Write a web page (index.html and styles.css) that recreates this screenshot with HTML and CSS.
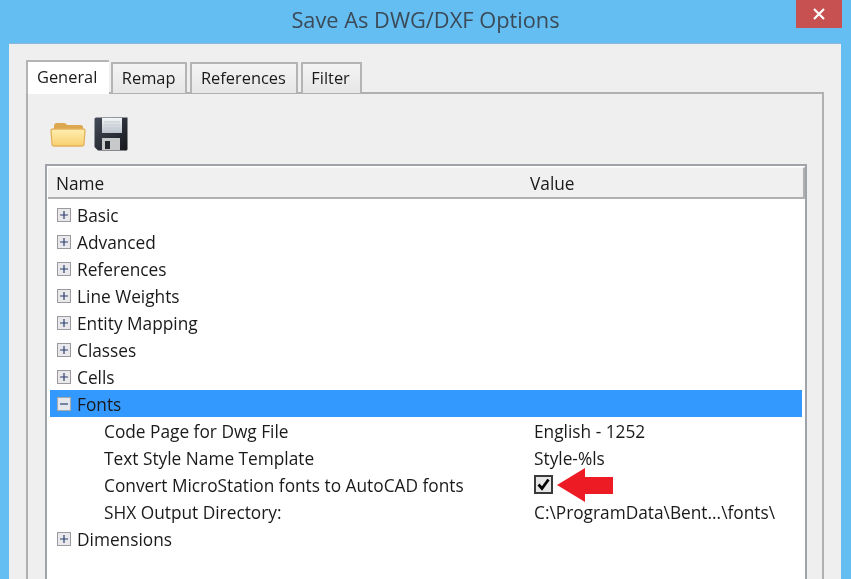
FILE: index.html
```html
<!DOCTYPE html>
<html lang="en">
<head>
<meta charset="utf-8">
<title>Save As DWG/DXF Options</title>
<link rel="stylesheet" href="styles.css">
</head>
<body>
<div class="titlebar">
  <span></span>
  <h1 class="title">Save As DWG/DXF Options</h1>
  <div class="close"><svg width="14" height="14" viewBox="0 0 14 14"><path d="M2 2 L12 12 M12 2 L2 12" stroke="#fff" stroke-width="2.200" fill="none"/></svg></div>
</div>
<main class="client">
  <div class="tabs">
    <div class="tab active">General</div>
    <div class="tab">Remap</div>
    <div class="tab">References</div>
    <div class="tab">Filter</div>
  </div>
  <section class="pane">
    <div class="toolbar">
      <svg class="ico-folder" width="36" height="25" viewBox="0 0 36 25">
        <defs>
          <linearGradient id="fg" x1="0" y1="0" x2="0" y2="1"><stop offset="0" stop-color="#ffeeb0"/><stop offset="1" stop-color="#f9d070"/></linearGradient>
        </defs>
        <path d="M4 4 Q4 1 7 1 H14 Q16 1 17 3 H30 Q33 3 33 5 V9 H4 Z" fill="#dca74e"/>
        <path d="M1 9 Q1 7 3 7 H33 Q35 7 35 9 L34 22 Q34 24 32 24 H4 Q2 24 2 22 Z" fill="url(#fg)" stroke="#e3b25c" stroke-width="1.300"/>
      </svg>
      <svg class="ico-disk" width="34" height="34" viewBox="0 0 34 34">
        <defs>
          <linearGradient id="dg" x1="0" y1="0" x2="1" y2="1"><stop offset="0" stop-color="#454b58"/><stop offset="1" stop-color="#15171c"/></linearGradient>
          <linearGradient id="lb" x1="0" y1="0" x2="0" y2="1"><stop offset="0" stop-color="#f4f6f8"/><stop offset="1" stop-color="#bcc3cb"/></linearGradient>
        </defs>
        <path d="M0.500 2 Q0.500 0.500 2 0.500 H33.500 V32 Q33.500 33.500 32 33.500 H4 L0.500 30 Z" fill="url(#dg)"/>
        <rect x="8" y="1" width="20" height="15" fill="url(#lb)"/>
        <path d="M10 5 H26 M10 8 H26 M10 11 H26" stroke="#c3cad2" stroke-width="1"/>
        <rect x="8" y="21" width="18" height="12" fill="#c6c8ca"/>
        <rect x="11" y="24" width="5" height="8" fill="#23262c"/>
      </svg>
    </div>
    <div class="tree">
      <div class="head">
        <div class="head-name">Name</div>
        <div class="head-value">Value</div>
      </div>
      <div class="row"><svg class="exp" viewBox="0 0 14 14"><use href="#plus"/></svg><span class="label">Basic</span></div>
      <div class="row"><svg class="exp" viewBox="0 0 14 14"><use href="#plus"/></svg><span class="label">Advanced</span></div>
      <div class="row"><svg class="exp" viewBox="0 0 14 14"><use href="#plus"/></svg><span class="label">References</span></div>
      <div class="row"><svg class="exp" viewBox="0 0 14 14"><use href="#plus"/></svg><span class="label">Line Weights</span></div>
      <div class="row"><svg class="exp" viewBox="0 0 14 14"><use href="#plus"/></svg><span class="label">Entity Mapping</span></div>
      <div class="row"><svg class="exp" viewBox="0 0 14 14"><use href="#plus"/></svg><span class="label">Classes</span></div>
      <div class="row"><svg class="exp" viewBox="0 0 14 14"><use href="#plus"/></svg><span class="label">Cells</span></div>
      <div class="row selected"><svg class="exp" viewBox="0 0 14 14"><use href="#minus"/></svg><span class="label">Fonts</span></div>
      <div class="row child"><span class="name">Code Page for Dwg File</span><span class="value">English - 1252</span></div>
      <div class="row child"><span class="name">Text Style Name Template</span><span class="value">Style-%ls</span></div>
      <div class="row child"><span class="name">Convert MicroStation fonts to AutoCAD fonts</span>
        <span class="check-cell">
          <svg class="check" width="19" height="19" viewBox="0 0 19 19">
            <rect x="1" y="1" width="17" height="17" fill="#e6e6e6" stroke="#3a3a3a" stroke-width="2"/>
            <path d="M4.500 9.500 L8 13.500 L14.500 4.500" fill="none" stroke="#000" stroke-width="2.800"/>
          </svg>
          <svg class="arrow" width="56" height="34" viewBox="0 0 56 34"><path d="M0 17 L28 0 V9 H56 V26 H28 V34 Z" fill="#ed1c24"/></svg>
        </span>
      </div>
      <div class="row child"><span class="name">SHX Output Directory:</span><span class="value">C:\ProgramData\Bent...\fonts\</span></div>
      <div class="row"><svg class="exp" viewBox="0 0 14 14"><use href="#plus"/></svg><span class="label">Dimensions</span></div>
    </div>
  </section>
</main>
<svg class="defs" width="0" height="0">
  <defs>
    <g id="plus"><rect x="0.500" y="0.500" width="13" height="13" fill="#e9e9ec" stroke="#9a9a9e"/><path d="M3 7 H11 M7 3 V11" stroke="#2f3f70" stroke-width="1.200"/></g>
    <g id="minus"><rect x="0.500" y="0.500" width="13" height="13" fill="#e4e8ee" stroke="#a8a8ac"/><path d="M3 7 H11" stroke="#2f3f70" stroke-width="1.200"/></g>
  </defs>
</svg>
</body>
</html>
```
FILE: styles.css
```css
html, body {
  margin: 0;
  height: 579px;
  overflow: hidden;
}
body {
  background: #65bef2;
  font-family: "Open Sans", "Noto Sans", sans-serif;
  font-size: 17.3px;
  color: #1a1a1a;
}
.titlebar {
  height: 43px;
  display: grid;
  grid-template-columns: 1fr auto 1fr;
  align-items: start;
  filter: blur(0.3px);
}
.title {
  margin: 5px 0 0;
  font-size: 21.8px;
  font-weight: 400;
  line-height: 30px;
  color: #3b4a57;
}
.close {
  justify-self: end;
  width: 46px;
  height: 28px;
  margin-right: 9px;
  background: #c75050;
  display: flex;
  align-items: center;
  justify-content: center;
}
.client {
  margin: 0 10px 0 9px;
  height: 536px;
  background: #efefef;
  border-top: 1px solid #8ab8d8;
  padding: 16px 17px 0;
  box-sizing: border-box;
  filter: blur(0.3px);
}
.tabs {
  display: flex;
  height: 33px;
  gap: 3px;
  font-size: 16.4px;
  position: relative;
  z-index: 1;
}
.tab {
  height: 29px;
  margin-top: 2px;
  padding: 0 10px 0 8.5px;
  line-height: 27px;
  background: linear-gradient(#f4f4f4, #e6e6e6);
  border: 2px solid #b4b4b4;
  border-bottom: 0;
  border-radius: 1px 1px 0 0;
}
.tab.active {
  background: #fff;
  margin-top: 0;
  margin-right: -1px;
  height: 32px;
  line-height: 29px;
  padding: 0 12px 0 9px;
  border-right: 0;
}
.pane {
  margin-top: -1px;
  height: 500px;
  border: 2px solid #b0b0b0;
  padding: 0 15px 0 17px;
  box-sizing: border-box;
}
.toolbar {
  display: flex;
  align-items: flex-start;
  gap: 8px;
  height: 70px;
  padding: 23px 0 0 5px;
  box-sizing: border-box;
}
.ico-folder { margin-top: 5px; }
.tree {
  height: 420px;
  background: #fff;
  border: 2px solid #a0a4aa;
  box-sizing: border-box;
}
.head {
  display: flex;
  height: 32px;
  margin: 1px 0 0 1px;
  background: #f0f0f0;
  border-bottom: 2px solid #b0b0b0;
  border-right: 2px solid #b0b0b0;
  border-top: 1px solid #f8f8f8;
  box-sizing: border-box;
  align-items: center;
}
.head-name { width: 482px; padding: 2px 0 0 8px; box-sizing: border-box; }
.head-value { padding-top: 2px; }
.row {
  display: flex;
  align-items: center;
  height: 27px;
  margin: 0 3px 0 3px;
  padding-left: 7px;
}
.head + .row { margin-top: 2px; }
.row.selected { background: #3399ff; }
.exp { width: 14px; height: 14px; flex: none; margin-right: 6px; }
.row.child { padding-left: 54px; }
.label { padding-top: 2px; }
.name { width: 430px; flex: none; white-space: nowrap; padding-top: 2px; }
.value { white-space: nowrap; padding-top: 2px; }
.check-cell { display: flex; align-items: center; }
.check { flex: none; }
.arrow { flex: none; margin-left: 4px; }
.defs { display: block; }
```
